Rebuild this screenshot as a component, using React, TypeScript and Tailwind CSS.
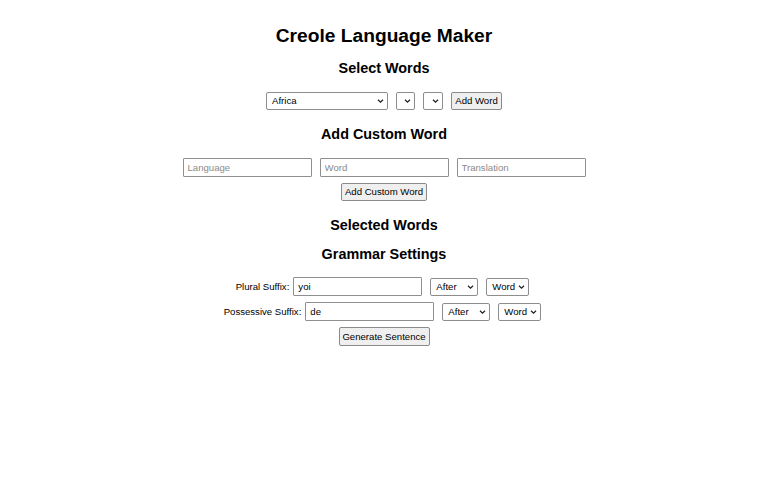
import { useState } from "react";

function Chevron() {
  return (
    <svg
      width="7"
      height="5"
      viewBox="0 0 7 5"
      className="pointer-events-none absolute right-[4px] top-1/2 -translate-y-1/2"
    >
      <path d="M1 1.2 L3.5 3.6 L6 1.2" fill="none" stroke="#222" strokeWidth="1.3" />
    </svg>
  );
}

function Select({
  width,
  value,
  options,
  onChange,
}: {
  width: string;
  value: string;
  options: string[];
  onChange?: (v: string) => void;
}) {
  return (
    <div className={`relative h-[18px] ${width}`}>
      <select
        value={value}
        onChange={(e) => onChange?.(e.target.value)}
        className="h-full w-full appearance-none rounded-[2px] border border-[#8d8d8d] bg-white pl-[5px] pr-[12px] text-[9.6px] leading-none text-black outline-none"
      >
        {options.map((o) => (
          <option key={o} value={o}>
            {o}
          </option>
        ))}
      </select>
      <Chevron />
    </div>
  );
}

function Button({ children, width, height = "h-[18px]" }: { children: string; width: string; height?: string }) {
  return (
    <button
      className={`${height} ${width} rounded-[2px] border border-[#8a8a8a] bg-[#efefef] text-[9.6px] leading-none text-black`}
    >
      {children}
    </button>
  );
}

function TextInput({
  placeholder,
  value,
  onChange,
}: {
  placeholder?: string;
  value?: string;
  onChange?: (v: string) => void;
}) {
  return (
    <input
      type="text"
      placeholder={placeholder}
      value={value ?? ""}
      onChange={(e) => onChange?.(e.target.value)}
      className="h-[19px] w-[129px] rounded-[1px] border border-[#8f8f8f] bg-white px-[4px] text-[9.6px] text-black outline-none placeholder:text-[#8a8a8a]"
    />
  );
}

export default function App() {
  const [region, setRegion] = useState("Africa");
  const [plural, setPlural] = useState("yoi");
  const [possessive, setPossessive] = useState("de");
  const [lang, setLang] = useState("");
  const [word, setWord] = useState("");
  const [translation, setTranslation] = useState("");

  return (
    <div
      className="flex min-h-screen w-full flex-col items-center bg-white text-[9.6px] text-black"
      style={{ fontFamily: '"Liberation Sans", Arial, sans-serif' }}
    >
      <h1 className="mt-[25px] text-[19.2px] font-bold leading-[22px]">Creole Language Maker</h1>

      <h2 className="mt-[12px] text-[14.4px] font-bold leading-[18px]">Select Words</h2>
      <div className="mt-[15px] flex items-center gap-[8px]">
        <Select
          width="w-[122px]"
          value={region}
          onChange={setRegion}
          options={["Africa", "Europe", "Asia", "Americas"]}
        />
        <Select width="w-[19px]" value="" options={[""]} />
        <Select width="w-[20px]" value="" options={[""]} />
        <Button width="w-[51px]">Add Word</Button>
      </div>

      <h2 className="mt-[15px] text-[14.4px] font-bold leading-[18px]">Add Custom Word</h2>
      <div className="mt-[15px] flex items-center gap-[8px]">
        <TextInput placeholder="Language" value={lang} onChange={setLang} />
        <TextInput placeholder="Word" value={word} onChange={setWord} />
        <TextInput placeholder="Translation" value={translation} onChange={setTranslation} />
      </div>
      <div className="mt-[6px] flex">
        <Button width="w-[86px]">Add Custom Word</Button>
      </div>

      <h2 className="mt-[15px] text-[14.4px] font-bold leading-[18px]">Selected Words</h2>

      <h2 className="mt-[11px] text-[14.4px] font-bold leading-[18px]">Grammar Settings</h2>
      <div className="mt-[14px] flex items-center pr-[3px]">
        <span className="mr-[4px] leading-none">Plural Suffix:</span>
        <TextInput value={plural} onChange={setPlural} />
        <div className="ml-[8px]">
          <Select width="w-[48px]" value="After" options={["Before", "After"]} />
        </div>
        <div className="ml-[8px]">
          <Select width="w-[43px]" value="Word" options={["Word", "Letter"]} />
        </div>
      </div>
      <div className="mt-[6px] flex items-center pr-[3px]">
        <span className="mr-[4px] leading-none">Possessive Suffix:</span>
        <TextInput value={possessive} onChange={setPossessive} />
        <div className="ml-[8px]">
          <Select width="w-[48px]" value="After" options={["Before", "After"]} />
        </div>
        <div className="ml-[8px]">
          <Select width="w-[43px]" value="Word" options={["Word", "Letter"]} />
        </div>
      </div>
      <div className="mt-[6px] flex">
        <Button width="w-[91px]" height="h-[19px]">Generate Sentence</Button>
      </div>
    </div>
  );
}
